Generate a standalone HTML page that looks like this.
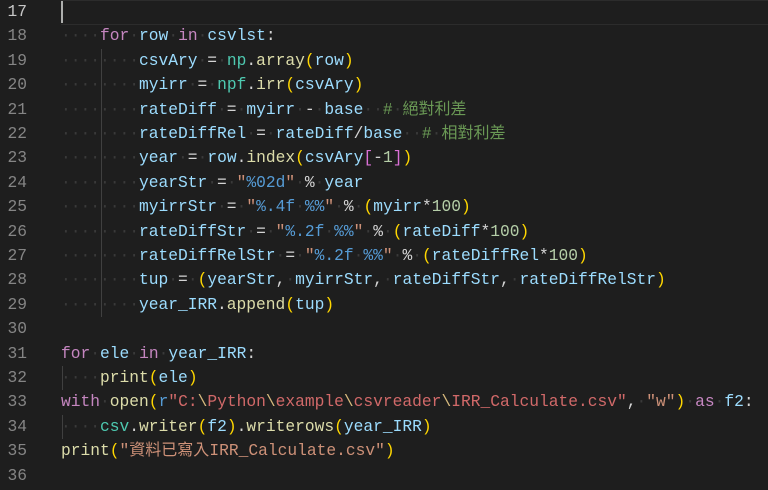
<!DOCTYPE html>
<html><head><meta charset="utf-8"><style>
html,body{margin:0;padding:0;background:#1e1e1e;width:768px;height:490px;overflow:hidden}
.l{position:absolute;left:0;height:24.4px;line-height:24.4px;white-space:pre;font-family:"Liberation Mono","Noto Sans CJK TC",monospace;font-size:16.25px;color:#d4d4d4;overflow:hidden;width:768px}
.ln{position:absolute;left:0;width:27px;text-align:right;color:#858585}
.cd{position:absolute;left:61px}
.k{color:#c586c0}.v{color:#9cdcfe}.f{color:#dcdcaa}.m{color:#4ec9b0}.s{color:#ce9178}.n{color:#b5cea8}.c{color:#6a9955}.y{color:#ffd700}.p{color:#da70d6}.w{color:#3a3a3a}.r{color:#d16969}.e{color:#d7ba7d}.b{color:#569cd6}
.cjk{font-family:"Noto Sans CJK TC",sans-serif;line-height:1;display:inline-block;vertical-align:baseline;height:18px;font-size:16px}
.g{position:absolute;width:1px;background:#404040}
</style></head><body>
<div style="position:absolute;left:61px;top:0;width:707px;height:23px;border:1px solid #2c2c2c;border-left:none;border-right:none;top:0"></div>
<div style="position:absolute;left:61px;top:1px;width:2px;height:22px;background:#aeafad"></div>
<div class="g" style="left:101px;top:49px;height:268px"></div>
<div class="g" style="left:62px;top:366px;height:24px"></div>
<div class="g" style="left:62px;top:415px;height:24px"></div>

<div class="l" style="top:0"><span class="ln" style="color:#c6c6c6">17</span></div>
<div class="l" style="top:24.4px"><span class="ln">18</span><span class="cd"><span class="w">····</span><span class="k">for</span><span class="w">·</span><span class="v">row</span><span class="w">·</span><span class="k">in</span><span class="w">·</span><span class="v">csvlst</span>:</span></div>
<div class="l" style="top:48.8px"><span class="ln">19</span><span class="cd"><span class="w">········</span><span class="v">csvAry</span><span class="w">·</span>=<span class="w">·</span><span class="m">np</span>.<span class="f">array</span><span class="y">(</span><span class="v">row</span><span class="y">)</span></span></div>
<div class="l" style="top:73.2px"><span class="ln">20</span><span class="cd"><span class="w">········</span><span class="v">myirr</span><span class="w">·</span>=<span class="w">·</span><span class="m">npf</span>.<span class="f">irr</span><span class="y">(</span><span class="v">csvAry</span><span class="y">)</span></span></div>
<div class="l" style="top:97.6px"><span class="ln">21</span><span class="cd"><span class="w">········</span><span class="v">rateDiff</span><span class="w">·</span>=<span class="w">·</span><span class="v">myirr</span><span class="w">·</span>-<span class="w">·</span><span class="v">base</span><span class="w">··</span><span class="c">#<span class="w">·</span><span class="cjk">絕對利差</span></span></span></div>
<div class="l" style="top:122px"><span class="ln">22</span><span class="cd"><span class="w">········</span><span class="v">rateDiffRel</span><span class="w">·</span>=<span class="w">·</span><span class="v">rateDiff</span>/<span class="v">base</span><span class="w">··</span><span class="c">#<span class="w">·</span><span class="cjk">相對利差</span></span></span></div>
<div class="l" style="top:146.4px"><span class="ln">23</span><span class="cd"><span class="w">········</span><span class="v">year</span><span class="w">·</span>=<span class="w">·</span><span class="v">row</span>.<span class="f">index</span><span class="y">(</span><span class="v">csvAry</span><span class="p">[</span>-<span class="n">1</span><span class="p">]</span><span class="y">)</span></span></div>
<div class="l" style="top:170.8px"><span class="ln">24</span><span class="cd"><span class="w">········</span><span class="v">yearStr</span><span class="w">·</span>=<span class="w">·</span><span class="s">"</span><span class="b">%02d</span><span class="s">"</span><span class="w">·</span>%<span class="w">·</span><span class="v">year</span></span></div>
<div class="l" style="top:195.2px"><span class="ln">25</span><span class="cd"><span class="w">········</span><span class="v">myirrStr</span><span class="w">·</span>=<span class="w">·</span><span class="s">"</span><span class="b">%.4f</span><span class="w">·</span><span class="b">%%</span><span class="s">"</span><span class="w">·</span>%<span class="w">·</span><span class="y">(</span><span class="v">myirr</span>*<span class="n">100</span><span class="y">)</span></span></div>
<div class="l" style="top:219.6px"><span class="ln">26</span><span class="cd"><span class="w">········</span><span class="v">rateDiffStr</span><span class="w">·</span>=<span class="w">·</span><span class="s">"</span><span class="b">%.2f</span><span class="w">·</span><span class="b">%%</span><span class="s">"</span><span class="w">·</span>%<span class="w">·</span><span class="y">(</span><span class="v">rateDiff</span>*<span class="n">100</span><span class="y">)</span></span></div>
<div class="l" style="top:244px"><span class="ln">27</span><span class="cd"><span class="w">········</span><span class="v">rateDiffRelStr</span><span class="w">·</span>=<span class="w">·</span><span class="s">"</span><span class="b">%.2f</span><span class="w">·</span><span class="b">%%</span><span class="s">"</span><span class="w">·</span>%<span class="w">·</span><span class="y">(</span><span class="v">rateDiffRel</span>*<span class="n">100</span><span class="y">)</span></span></div>
<div class="l" style="top:268.4px"><span class="ln">28</span><span class="cd"><span class="w">········</span><span class="v">tup</span><span class="w">·</span>=<span class="w">·</span><span class="y">(</span><span class="v">yearStr</span>,<span class="w">·</span><span class="v">myirrStr</span>,<span class="w">·</span><span class="v">rateDiffStr</span>,<span class="w">·</span><span class="v">rateDiffRelStr</span><span class="y">)</span></span></div>
<div class="l" style="top:292.8px"><span class="ln">29</span><span class="cd"><span class="w">········</span><span class="v">year_IRR</span>.<span class="f">append</span><span class="y">(</span><span class="v">tup</span><span class="y">)</span></span></div>
<div class="l" style="top:317.2px"><span class="ln">30</span></div>
<div class="l" style="top:341.6px"><span class="ln">31</span><span class="cd"><span class="k">for</span><span class="w">·</span><span class="v">ele</span><span class="w">·</span><span class="k">in</span><span class="w">·</span><span class="v">year_IRR</span>:</span></div>
<div class="l" style="top:366px"><span class="ln">32</span><span class="cd"><span class="w">····</span><span class="f">print</span><span class="y">(</span><span class="v">ele</span><span class="y">)</span></span></div>
<div class="l" style="top:390.4px"><span class="ln">33</span><span class="cd"><span class="k">with</span><span class="w">·</span><span class="f">open</span><span class="y">(</span><span class="b">r</span><span class="r">"C:</span><span class="e">\</span><span class="r">Python</span><span class="e">\</span><span class="r">example</span><span class="e">\</span><span class="r">csvreader</span><span class="e">\</span><span class="r">IRR_Calculate.csv"</span>,<span class="w">·</span><span class="s">"w"</span><span class="y">)</span><span class="w">·</span><span class="k">as</span><span class="w">·</span><span class="v">f2</span>:</span></div>
<div class="l" style="top:414.8px"><span class="ln">34</span><span class="cd"><span class="w">····</span><span class="m">csv</span>.<span class="f">writer</span><span class="y">(</span><span class="v">f2</span><span class="y">)</span>.<span class="f">writerows</span><span class="y">(</span><span class="v">year_IRR</span><span class="y">)</span></span></div>
<div class="l" style="top:439.2px"><span class="ln">35</span><span class="cd"><span class="f">print</span><span class="y">(</span><span class="s">"<span class="cjk">資料已寫入</span>IRR_Calculate.csv"</span><span class="y">)</span></span></div>
<div class="l" style="top:463.6px"><span class="ln">36</span></div>
</body></html>
